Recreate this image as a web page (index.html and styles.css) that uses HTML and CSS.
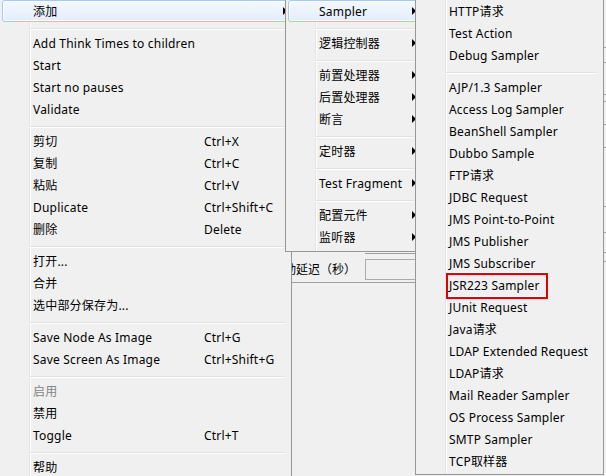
FILE: index.html
```html
<!DOCTYPE html>
<html>
<head>
    <title>JMeter context menu</title>
    <link rel="stylesheet" href="styles.css">
</head>
<body>
    <div class="screen">
        <!-- Dialog behind the popup menus -->
        <div class="backdrop">
            <div class="form">
                <div class="field-above"></div>
                <div class="delay-row">
                    <span class="delay-label">启动延迟（秒）</span>
                    <span class="delay-input"></span>
                </div>
                <div class="panel"></div>
            </div>
            <div class="edge">
                <div class="edge-line" style="height: 48px"></div>
                <div class="edge-line" style="height: 15px"></div>
                <div class="edge-line" style="height: 32px"></div>
                <div class="edge-line" style="height: 7px"></div>
                <div class="edge-line" style="height: 23px"></div>
                <div class="edge-line" style="height: 23px"></div>
                <div class="edge-line" style="height: 59px"></div>
                <div class="edge-line" style="height: 26px"></div>
                <div class="edge-line" style="height: 20px"></div>
                <div class="edge-line" style="height: 9px"></div>
            </div>
        </div>

        <!-- Main context menu -->
        <div class="menu menu-main">
            <div class="item active">添加<span class="arrow"></span></div>
            <div class="sep"></div>
            <div class="item">Add Think Times to children</div>
            <div class="item">Start</div>
            <div class="item">Start no pauses</div>
            <div class="item">Validate</div>
            <div class="sep"></div>
            <div class="item"><span class="label">剪切</span><span class="key">Ctrl+X</span></div>
            <div class="item"><span class="label">复制</span><span class="key">Ctrl+C</span></div>
            <div class="item"><span class="label">粘贴</span><span class="key">Ctrl+V</span></div>
            <div class="item"><span class="label">Duplicate</span><span class="key">Ctrl+Shift+C</span></div>
            <div class="item"><span class="label">删除</span><span class="key">Delete</span></div>
            <div class="sep"></div>
            <div class="item">打开...</div>
            <div class="item">合并</div>
            <div class="item">选中部分保存为...</div>
            <div class="sep"></div>
            <div class="item"><span class="label">Save Node As Image</span><span class="key">Ctrl+G</span></div>
            <div class="item"><span class="label">Save Screen As Image</span><span class="key">Ctrl+Shift+G</span></div>
            <div class="sep"></div>
            <div class="item disabled">启用</div>
            <div class="item">禁用</div>
            <div class="item"><span class="label">Toggle</span><span class="key">Ctrl+T</span></div>
            <div class="sep"></div>
            <div class="item">帮助</div>
        </div>

        <!-- 添加 submenu -->
        <div class="menu menu-add">
            <div class="item active">Sampler<span class="arrow"></span></div>
            <div class="sep"></div>
            <div class="item">逻辑控制器<span class="arrow"></span></div>
            <div class="sep"></div>
            <div class="item">前置处理器<span class="arrow"></span></div>
            <div class="item">后置处理器<span class="arrow"></span></div>
            <div class="item">断言<span class="arrow"></span></div>
            <div class="sep"></div>
            <div class="item">定时器<span class="arrow"></span></div>
            <div class="sep"></div>
            <div class="item">Test Fragment<span class="arrow"></span></div>
            <div class="sep"></div>
            <div class="item">配置元件<span class="arrow"></span></div>
            <div class="item">监听器<span class="arrow"></span></div>
        </div>

        <!-- Sampler submenu -->
        <div class="menu menu-sampler">
            <div class="item">HTTP请求</div>
            <div class="item">Test Action</div>
            <div class="item">Debug Sampler</div>
            <div class="sep"></div>
            <div class="item">AJP/1.3 Sampler</div>
            <div class="item">Access Log Sampler</div>
            <div class="item">BeanShell Sampler</div>
            <div class="item">Dubbo Sample</div>
            <div class="item">FTP请求</div>
            <div class="item">JDBC Request</div>
            <div class="item">JMS Point-to-Point</div>
            <div class="item">JMS Publisher</div>
            <div class="item">JMS Subscriber</div>
            <div class="item marked">JSR223 Sampler</div>
            <div class="item">JUnit Request</div>
            <div class="item">Java请求</div>
            <div class="item">LDAP Extended Request</div>
            <div class="item">LDAP请求</div>
            <div class="item">Mail Reader Sampler</div>
            <div class="item">OS Process Sampler</div>
            <div class="item">SMTP Sampler</div>
            <div class="item">TCP取样器</div>
        </div>
    </div>
</body>
</html>
```

FILE: styles.css
```css
body {
    margin: 0;
    background: #f0f0f0;
    font-family: "Noto Sans", "Noto Sans CJK SC", sans-serif;
    font-size: 12px;
    color: #000;
}

.screen {
    position: relative;
    width: 606px;
    height: 476px;
    overflow: hidden;
}

/* Dialog behind the menus */
.backdrop {
    display: flex;
    height: 100%;
}

.form {
    flex: 1;
    display: flex;
    flex-direction: column;
    padding-top: 240px;
}

.field-above {
    margin-left: 365px;
    height: 13px;
    border-bottom: 1px solid #a0a0a0;
}

.delay-row {
    display: flex;
    align-items: flex-start;
    height: 23px;
    padding: 5px 0 0 272px;
}

.delay-label {
    line-height: 21px;
    width: 93px;
}

.delay-input {
    width: 200px;
    height: 21px;
    box-sizing: border-box;
    border: 1px solid #ababab;
}

.panel {
    flex: 1;
    margin-left: 292px;
    border-top: 1px solid #a0a0a0;
}

.edge {
    width: 3px;
}

.edge-line {
    border-bottom: 1px solid #a0a0a0;
    box-sizing: border-box;
}

/* Popup menus */
.menu {
    position: absolute;
    top: -3px;
    box-sizing: border-box;
    padding: 2px;
    background: #f0f0f0;
    border: 1px solid #979797;
}

.menu::before {
    content: '';
    position: absolute;
    top: 0;
    bottom: 0;
    left: 29px;
    width: 1px;
    background: #e2e3e3;
    border-right: 1px solid #fff;
}

.menu-main {
    left: -1px;
    width: 293px;
}

.menu-add {
    left: 285px;
    width: 136px;
    padding-bottom: 3px;
}

.menu-sampler {
    left: 415px;
    width: 189px;
}

.item {
    position: relative;
    display: flex;
    align-items: center;
    height: 22px;
    padding-left: 30px;
    white-space: nowrap;
    letter-spacing: 0.2px;
    border: 1px solid transparent;
    border-radius: 3px;
    box-sizing: border-box;
}

.item .label {
    width: 171px;
    flex-shrink: 0;
}

.item.active {
    border-color: #a8c8ee;
    background: linear-gradient(#f3f8fe, #e3edfb);
    box-shadow: inset 0 0 0 1px rgba(255,255,255,0.7);
}

.item.disabled {
    color: #858585;
}

.item.marked::after {
    content: '';
    position: absolute;
    left: 27px;
    top: -2px;
    width: 102px;
    height: 26px;
    box-sizing: border-box;
    border: 2px solid #e40000;
}

.arrow {
    margin-left: auto;
    margin-right: 1px;
    width: 0;
    height: 0;
    border-left: 4px solid #000;
    border-top: 4px solid transparent;
    border-bottom: 4px solid transparent;
}

.sep {
    position: relative;
    height: 10px;
    margin-left: 27px;
    margin-right: 4px;
}

.sep::after {
    content: '';
    position: absolute;
    left: 0;
    right: 0;
    top: 6px;
    height: 1px;
    background: #e0e0e0;
    border-bottom: 1px solid #fff;
}
```
